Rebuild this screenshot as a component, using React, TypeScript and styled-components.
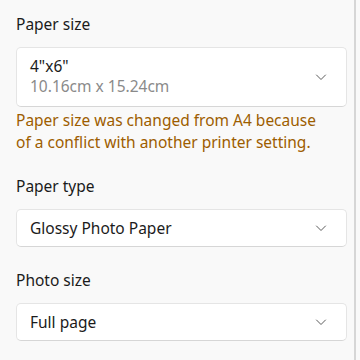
import React from "react"
import styled, { createGlobalStyle } from "styled-components"

const GlobalStyle = createGlobalStyle`
  html, body {
    margin: 0;
    padding: 0;
    background: #f9f9f9;
  }
  body {
    font-family: "Noto Sans", "Open Sans", sans-serif;
    color: #1b1b1b;
  }
`

type Option = {
  label: string
  value: string
  detail?: string
  warning?: string
}

const options: Option[] = [
  {
    label: "Paper size",
    value: '4"x6"',
    detail: "10.16cm x 15.24cm",
    warning: "Paper size was changed from A4 because of a conflict with another printer setting.",
  },
  { label: "Paper type", value: "Glossy Photo Paper" },
  { label: "Photo size", value: "Full page" },
]

export default function App() {
  return (
    <>
      <GlobalStyle />
      <Panel>
        {options.map((option) => (
          <Section key={option.label}>
            <Label>{option.label}</Label>
            <Select>
              <SelectText>
                <Value>{option.value}</Value>
                {option.detail && <Detail>{option.detail}</Detail>}
              </SelectText>
              <Chevron width="12" height="12" viewBox="0 0 12 12">
                <path d="M1.5 4 L6 8.5 L10.5 4" fill="none" stroke="#5c5c5c" strokeWidth="1" strokeLinecap="round" strokeLinejoin="round" />
              </Chevron>
            </Select>
            {option.warning && <Warning>{option.warning}</Warning>}
          </Section>
        ))}
      </Panel>
    </>
  )
}

const Panel = styled.div`
  width: 356px;
  height: 360px;
  box-sizing: border-box;
  padding: 13px 7px 0 16px;
  border-right: 2px solid #d6d6d6;
  display: flex;
  flex-direction: column;
  gap: 22px;
`

const Section = styled.section`
  display: flex;
  flex-direction: column;
`

const Label = styled.div`
  font-size: 15.5px;
  line-height: 22px;
  margin-bottom: 12px;
`

const Select = styled.div`
  display: flex;
  align-items: center;
  justify-content: space-between;
  background: #ffffff;
  border: 1px solid #e5e5e5;
  border-bottom-color: #d6d6d6;
  border-radius: 5px;
  padding: 8px 19px 8px 13px;
`

const SelectText = styled.div`
  display: flex;
  flex-direction: column;
`

const Value = styled.div`
  font-size: 15.5px;
  line-height: 20px;
`

const Detail = styled.div`
  font-size: 15.5px;
  line-height: 21px;
  color: #8a8a8a;
  margin-bottom: 1px;
`

const Chevron = styled.svg`
  flex-shrink: 0;
`

const Warning = styled.p`
  margin: 2px 0 0;
  max-width: 312px;
  font-size: 15.5px;
  line-height: 22px;
  color: #9d5d00;
`
